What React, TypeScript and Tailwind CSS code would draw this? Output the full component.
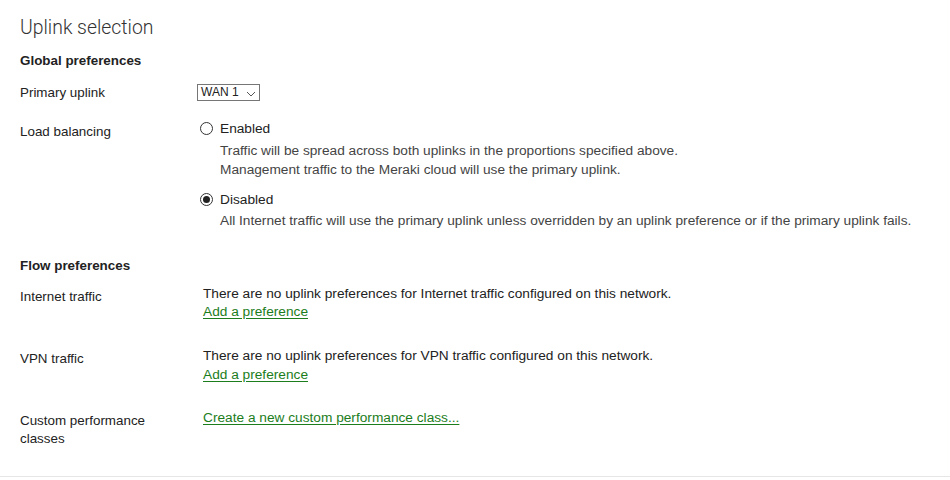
import React from "react";

function Radio({ checked }: { checked?: boolean }) {
  return (
    <span className="inline-flex items-center justify-center w-[13px] h-[13px] rounded-full border border-[#333] bg-white mr-[7px] shrink-0">
      {checked && <span className="w-[7px] h-[7px] rounded-full bg-[#222]" />}
    </span>
  );
}

function Link({ children }: { children: React.ReactNode }) {
  return (
    <a href="#" className="text-[#1b7d1b] underline underline-offset-2 decoration-[#1b7d1b]">
      {children}
    </a>
  );
}

export default function App() {
  return (
    <div
      className="w-[950px] h-[480px] bg-white text-[#222] text-[13.7px] leading-[19px] overflow-hidden flex flex-col"
      style={{ fontFamily: '"Liberation Sans", Arial, sans-serif' }}
    >
      <div className="px-5 flex-1">
        <h1
          className="text-[19.4px] font-light text-[#333] pt-[16px] leading-[24px]"
          style={{ fontFamily: 'Roboto, "Liberation Sans", sans-serif' }}
        >
          Uplink selection
        </h1>
        <h2 className="font-bold text-[13.4px] mt-[13px] leading-[16px]">Global preferences</h2>

        <div className="flex mt-[14px] items-center">
          <div className="w-[177px] text-[13.4px]">Primary uplink</div>
          <div className="inline-flex items-center border border-[#767676] h-[17px] px-[3px] text-[12px] leading-[15px]">
            <span>WAN 1</span>
            <svg width="10" height="6" viewBox="0 0 10 6" className="ml-[7px] mt-[3px]">
              <path d="M1 1 L5 5 L9 1" fill="none" stroke="#444" strokeWidth="0.9" />
            </svg>
          </div>
        </div>

        <div className="flex mt-[17px]">
          <div className="w-[180px] pt-[3px] text-[13.4px]">Load balancing</div>
          <div className="flex flex-col">
            <label className="flex items-center">
              <Radio />
              <span>Enabled</span>
            </label>
            <div className="pl-[20px] text-[#444] mt-[3px]">
              <div>Traffic will be spread across both uplinks in the proportions specified above.</div>
              <div>Management traffic to the Meraki cloud will use the primary uplink.</div>
            </div>
            <label className="flex items-center mt-[11px]">
              <Radio checked />
              <span>Disabled</span>
            </label>
            <div className="pl-[20px] text-[#444] mt-[2px]">
              All Internet traffic will use the primary uplink unless overridden by an uplink preference or if the primary uplink fails.
            </div>
          </div>
        </div>

        <h2 className="font-bold text-[13.4px] mt-[28px] leading-[16px]">Flow preferences</h2>

        <div className="flex mt-[11px]">
          <div className="w-[183px] pt-[2px] text-[13.4px]">Internet traffic</div>
          <div className="flex flex-col leading-[18px]">
            <div>There are no uplink preferences for Internet traffic configured on this network.</div>
            <div><Link>Add a preference</Link></div>
          </div>
        </div>

        <div className="flex mt-[25px]">
          <div className="w-[183px] pt-[3px] text-[13.4px]">VPN traffic</div>
          <div className="flex flex-col leading-[19px]">
            <div>There are no uplink preferences for VPN traffic configured on this network.</div>
            <div><Link>Add a preference</Link></div>
          </div>
        </div>

        <div className="flex mt-[24px]">
          <div className="w-[183px] pt-[4px] text-[13.4px] leading-[18px]">
            <div>Custom performance</div>
            <div>classes</div>
          </div>
          <div className="flex flex-col">
            <div><Link>Create a new custom performance class...</Link></div>
          </div>
        </div>
      </div>
      <div className="h-[1px] bg-[#e6e6e6] mb-[3px]" />
    </div>
  );
}
